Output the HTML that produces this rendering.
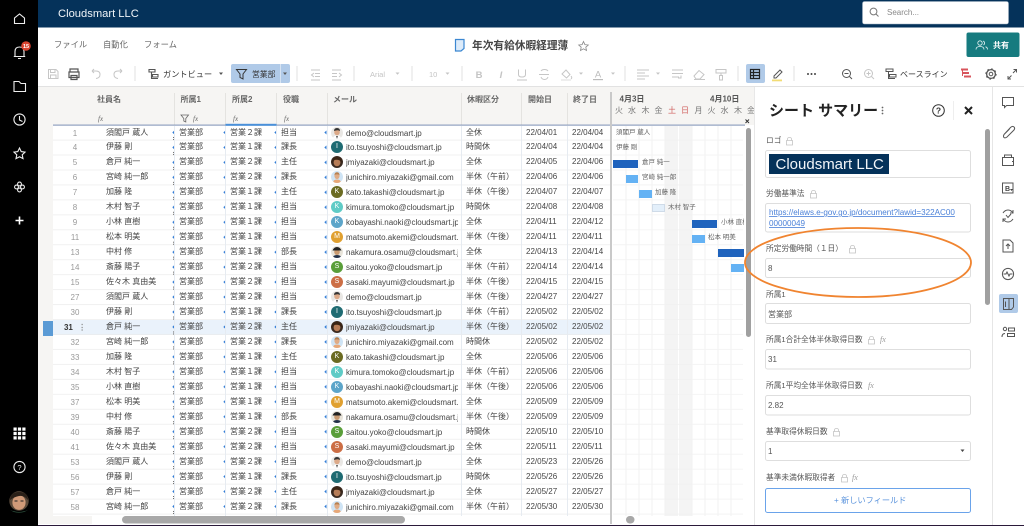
<!DOCTYPE html>
<html lang="ja"><head><meta charset="utf-8"><title>年次有給休暇経理薄</title>
<style>
html,body{margin:0;padding:0;width:1024px;height:526px;overflow:hidden;background:#fff}
*{box-sizing:border-box}
body{font-family:"Liberation Sans","Noto Sans CJK JP",sans-serif;position:relative;color:#444}
svg text{font-family:"Liberation Sans","Noto Sans CJK JP",sans-serif}
.abs{position:absolute}
#hdr{left:38px;top:87px;width:717px;height:38px;background:#f6f5f3}
#gut{left:38px;top:125px;width:15px;height:391px;background:#f6f5f3}
.r{position:absolute;left:0;width:558px;height:15px;font-size:8px;line-height:14px;white-space:nowrap}
.r>span{position:absolute;top:0}
.r>span:nth-child(1){left:0;width:44px;text-align:center;color:#999;top:1px}
.r>span:nth-child(2){left:53px}
.r>span:nth-child(3){left:126px}
.r>span:nth-child(4){left:177px}
.r>span:nth-child(5){left:228px}
.r>span:nth-child(6){left:293px;width:112px;overflow:hidden;height:15px;top:1px}
.r>span:nth-child(7){left:413px}
.r>span:nth-child(8){left:473px}
.r>span:nth-child(9){left:519px}
.r i{position:absolute;left:278px;top:1px;width:12px;height:12px;border-radius:50%;color:#fff;font:7px/12px "Liberation Sans",sans-serif;text-align:center;overflow:hidden}
.r i svg{display:block;width:12px;height:12px}
.hl{background:#eaf2fb}
.hl>span:nth-child(1){color:#333!important;font-weight:bold}
.bar{position:absolute;height:8px}
.d{background:#1f63bd}.l{background:#64b2f4}.p{background:#e3effa;border:1px solid #cfdbe8}
.gl{position:absolute;font-size:6.5px;color:#666;line-height:9px;white-space:nowrap;background:#fff0}
#gclip{left:612px;top:126px;width:132px;height:390px;overflow:hidden}
</style></head><body>
<div class="abs" id="hdr"></div>
<div class="abs" id="gut"></div>
<div class="abs" style="left:43px;top:320.5px;width:10px;height:15.5px;background:#5b9bd5"></div>
<div class="abs" style="left:38px;top:516px;width:54px;height:8px;background:#f6f5f3"></div>
<div class="abs" style="left:665px;top:126px;width:13px;height:390px;background:#f4f4f4"></div>
<div class="abs" style="left:679px;top:126px;width:13px;height:390px;background:#f4f4f4"></div>

<div class="abs" style="left:53px;top:125.5px;width:558px;height:0">
<div class="r" style="top:0"><span>1</span><span>須閣戸 蔵人</span><span>営業部</span><span>営業２課</span><span>担当</span><span>demo@cloudsmart.jp</span><span>全休</span><span>22/04/01</span><span>22/04/04</span><i><svg viewBox="0 0 12 12"><use href="#av1"/></svg></i></div>
<div class="r" style="top:14.96px"><span>4</span><span>伊藤 剛</span><span>営業部</span><span>営業１課</span><span>課長</span><span>ito.tsuyoshi@cloudsmart.jp</span><span>時間休</span><span>22/04/04</span><span>22/04/04</span><i style="background:#1f6b72">I</i></div>
<div class="r" style="top:29.92px"><span>5</span><span>倉戸 純一</span><span>営業部</span><span>営業２課</span><span>主任</span><span>jmiyazaki@cloudsmart.jp</span><span>全休</span><span>22/04/05</span><span>22/04/06</span><i><svg viewBox="0 0 12 12"><use href="#av2"/></svg></i></div>
<div class="r" style="top:44.88px"><span>6</span><span>宮崎 純一郎</span><span>営業部</span><span>営業２課</span><span>課長</span><span>junichiro.miyazaki@gmail.com</span><span>半休（午前）</span><span>22/04/06</span><span>22/04/06</span><i><svg viewBox="0 0 12 12"><use href="#av3"/></svg></i></div>
<div class="r" style="top:59.84px"><span>7</span><span>加藤 隆</span><span>営業部</span><span>営業１課</span><span>主任</span><span>kato.takashi@cloudsmart.jp</span><span>半休（午後）</span><span>22/04/07</span><span>22/04/07</span><i style="background:#6b6b22">K</i></div>
<div class="r" style="top:74.8px"><span>8</span><span>木村 智子</span><span>営業部</span><span>営業１課</span><span>担当</span><span>kimura.tomoko@cloudsmart.jp</span><span>時間休</span><span>22/04/08</span><span>22/04/08</span><i style="background:#5fcbc6">K</i></div>
<div class="r" style="top:89.76px"><span>9</span><span>小林 直樹</span><span>営業部</span><span>営業１課</span><span>担当</span><span>kobayashi.naoki@cloudsmart.jp</span><span>全休</span><span>22/04/11</span><span>22/04/12</span><i style="background:#5da5c9">K</i></div>
<div class="r" style="top:104.72px"><span>11</span><span>松本 明美</span><span>営業部</span><span>営業１課</span><span>担当</span><span>matsumoto.akemi@cloudsmart.jp</span><span>半休（午後）</span><span>22/04/11</span><span>22/04/11</span><i style="background:#e0a030">M</i></div>
<div class="r" style="top:119.68px"><span>13</span><span>中村 修</span><span>営業部</span><span>営業１課</span><span>部長</span><span>nakamura.osamu@cloudsmart.jp</span><span>全休</span><span>22/04/13</span><span>22/04/14</span><i><svg viewBox="0 0 12 12"><use href="#av4"/></svg></i></div>
<div class="r" style="top:134.64px"><span>14</span><span>斎藤 陽子</span><span>営業部</span><span>営業２課</span><span>担当</span><span>saitou.yoko@cloudsmart.jp</span><span>半休（午前）</span><span>22/04/14</span><span>22/04/14</span><i style="background:#5a9e3a">S</i></div>
<div class="r" style="top:149.6px"><span>15</span><span>佐々木 真由美</span><span>営業部</span><span>営業２課</span><span>担当</span><span>sasaki.mayumi@cloudsmart.jp</span><span>半休（午後）</span><span>22/04/15</span><span>22/04/15</span><i style="background:#cc6e45">S</i></div>
<div class="r" style="top:164.56px"><span>27</span><span>須閣戸 蔵人</span><span>営業部</span><span>営業２課</span><span>担当</span><span>demo@cloudsmart.jp</span><span>半休（午後）</span><span>22/04/27</span><span>22/04/27</span><i><svg viewBox="0 0 12 12"><use href="#av1"/></svg></i></div>
<div class="r" style="top:179.52px"><span>30</span><span>伊藤 剛</span><span>営業部</span><span>営業１課</span><span>課長</span><span>ito.tsuyoshi@cloudsmart.jp</span><span>半休（午前）</span><span>22/05/02</span><span>22/05/02</span><i style="background:#1f6b72">I</i></div>
<div class="r hl" style="top:194.48px"><span>31 <b style="font-weight:bold;color:#888;margin-left:3px">⋮</b></span><span>倉戸 純一</span><span>営業部</span><span>営業２課</span><span>主任</span><span>jmiyazaki@cloudsmart.jp</span><span>半休（午後）</span><span>22/05/02</span><span>22/05/02</span><i><svg viewBox="0 0 12 12"><use href="#av2"/></svg></i></div>
<div class="r" style="top:209.44px"><span>32</span><span>宮崎 純一郎</span><span>営業部</span><span>営業２課</span><span>課長</span><span>junichiro.miyazaki@gmail.com</span><span>時間休</span><span>22/05/02</span><span>22/05/02</span><i><svg viewBox="0 0 12 12"><use href="#av3"/></svg></i></div>
<div class="r" style="top:224.4px"><span>33</span><span>加藤 隆</span><span>営業部</span><span>営業１課</span><span>主任</span><span>kato.takashi@cloudsmart.jp</span><span>全休</span><span>22/05/06</span><span>22/05/06</span><i style="background:#6b6b22">K</i></div>
<div class="r" style="top:239.36px"><span>34</span><span>木村 智子</span><span>営業部</span><span>営業１課</span><span>担当</span><span>kimura.tomoko@cloudsmart.jp</span><span>半休（午前）</span><span>22/05/06</span><span>22/05/06</span><i style="background:#5fcbc6">K</i></div>
<div class="r" style="top:254.32px"><span>35</span><span>小林 直樹</span><span>営業部</span><span>営業１課</span><span>担当</span><span>kobayashi.naoki@cloudsmart.jp</span><span>半休（午後）</span><span>22/05/06</span><span>22/05/06</span><i style="background:#5da5c9">K</i></div>
<div class="r" style="top:269.28px"><span>37</span><span>松本 明美</span><span>営業部</span><span>営業１課</span><span>担当</span><span>matsumoto.akemi@cloudsmart.jp</span><span>全休</span><span>22/05/09</span><span>22/05/09</span><i style="background:#e0a030">M</i></div>
<div class="r" style="top:284.24px"><span>39</span><span>中村 修</span><span>営業部</span><span>営業１課</span><span>部長</span><span>nakamura.osamu@cloudsmart.jp</span><span>半休（午後）</span><span>22/05/09</span><span>22/05/09</span><i><svg viewBox="0 0 12 12"><use href="#av4"/></svg></i></div>
<div class="r" style="top:299.2px"><span>40</span><span>斎藤 陽子</span><span>営業部</span><span>営業２課</span><span>担当</span><span>saitou.yoko@cloudsmart.jp</span><span>時間休</span><span>22/05/10</span><span>22/05/10</span><i style="background:#5a9e3a">S</i></div>
<div class="r" style="top:314.16px"><span>41</span><span>佐々木 真由美</span><span>営業部</span><span>営業２課</span><span>担当</span><span>sasaki.mayumi@cloudsmart.jp</span><span>全休</span><span>22/05/11</span><span>22/05/11</span><i style="background:#cc6e45">S</i></div>
<div class="r" style="top:329.12px"><span>53</span><span>須閣戸 蔵人</span><span>営業部</span><span>営業２課</span><span>担当</span><span>demo@cloudsmart.jp</span><span>全休</span><span>22/05/23</span><span>22/05/26</span><i><svg viewBox="0 0 12 12"><use href="#av1"/></svg></i></div>
<div class="r" style="top:344.08px"><span>56</span><span>伊藤 剛</span><span>営業部</span><span>営業１課</span><span>課長</span><span>ito.tsuyoshi@cloudsmart.jp</span><span>時間休</span><span>22/05/26</span><span>22/05/26</span><i style="background:#1f6b72">I</i></div>
<div class="r" style="top:359.04px"><span>57</span><span>倉戸 純一</span><span>営業部</span><span>営業２課</span><span>主任</span><span>jmiyazaki@cloudsmart.jp</span><span>全休</span><span>22/05/27</span><span>22/05/27</span><i><svg viewBox="0 0 12 12"><use href="#av2"/></svg></i></div>
<div class="r" style="top:374px"><span>58</span><span>宮崎 純一郎</span><span>営業部</span><span>営業２課</span><span>課長</span><span>junichiro.miyazaki@gmail.com</span><span>半休（午前）</span><span>22/05/30</span><span>22/05/30</span><i><svg viewBox="0 0 12 12"><use href="#av3"/></svg></i></div>
</div>

<svg class="abs" style="left:0;top:0" width="1024" height="526" viewBox="0 0 1024 526">
<defs>
<symbol id="av1" viewBox="0 0 12 12"><rect width="12" height="12" fill="#e9e7e4"/><ellipse cx="6" cy="5" rx="2.8" ry="3.4" fill="#dca988"/><path d="M3 4Q3 1 6 1T9 4Q7 2.5 3 4z" fill="#333"/><path d="M2 12Q2 8.5 6 8.5T10 12z" fill="#fff"/><path d="M5 9h2l-1 3z" fill="#555"/></symbol>
<symbol id="av2" viewBox="0 0 12 12"><rect width="12" height="12" fill="#3a2a20"/><ellipse cx="6" cy="6.5" rx="3.4" ry="3.8" fill="#b77c56"/><path d="M1 6Q1 1 6 1T11 6Q8 3 3 4z" fill="#3a2414"/></symbol>
<symbol id="av3" viewBox="0 0 12 12"><rect width="12" height="12" fill="#cfe4f5"/><ellipse cx="6" cy="4.8" rx="2.6" ry="3.2" fill="#e0ac86"/><path d="M3.4 4Q3.6 1.2 6 1.2T8.6 4Q6 2.8 3.4 4z" fill="#b88050"/><path d="M2 12Q2 8.5 6 8.5T10 12z" fill="#e8a878"/></symbol>
<symbol id="av4" viewBox="0 0 12 12"><rect width="12" height="12" fill="#e8e4da"/><ellipse cx="6" cy="6" rx="2.8" ry="3" fill="#c99a70"/><path d="M1.5 4.5Q3 1 6 1T10.5 4.5z" fill="#222"/><path d="M1.5 12Q2 9 6 9T10.5 12z" fill="#223048"/></symbol>
<pattern id="rowp" x="0" y="125.5" width="1024" height="14.96" patternUnits="userSpaceOnUse">
<rect x="53" y="14.2" width="558" height=".7" fill="#ebebeb"/>
<rect x="613" y="14.2" width="130" height=".7" fill="#efefef"/>
<path d="M172.3 7l2-2v4zM223.3 7l2.2-2v4zM274.3 7l2.2-2v4zM324.3 7l2.2-2v4z" fill="#2f7bd6"/>
<rect x="173" y="11.5" width=".9" height="1" fill="#555"/><rect x="173" y="13.5" width=".9" height="1" fill="#555"/>
</pattern>
</defs>

<!-- grid overlay -->
<rect x="53" y="125.5" width="690" height="390" fill="url(#rowp)"/>
<g stroke="#e6ebf1" stroke-width="1">
<path d="M174.5 126V516M225.5 126V516M276.5 126V516M327.5 126V516M461.5 126V516M521.5 126V516M567.5 126V516"/>
</g>
<g stroke="#f2f2f2" stroke-width="1">
<path d="M626 126V516M639 126V516M652 126V516M665 126V516M692 126V516M705 126V516M718 126V516M731 126V516"/>
</g>
<g stroke="#e4e3e0" stroke-width="1">
<path d="M174.5 93V125M225.5 93V125M276.5 93V125M327.5 93V125M461.5 93V125M521.5 93V125M567.5 93V125"/>
</g>
<rect x="53" y="124.6" width="692" height="1" fill="#7c8fb4"/>
<rect x="225.5" y="123.8" width="51" height="2" fill="#4a90d9"/>
<rect x="610" y="92" width="2" height="432" fill="#c9c9c9"/>

<!-- sidebar -->
<rect width="38" height="526" fill="#000"/>
<rect x="38" width="986" height="27.5" fill="#05325a"/>
<rect x="38" y="86" width="986" height="1" fill="#e2e2e2"/>
<rect x="38" y="525" width="986" height="1" fill="#2b1a3a"/>
<g fill="none" stroke="#eee" stroke-width="1.1">
<path d="M14.5 23.5V18L19.5 14L24.5 18V23.5z"/>
<path d="M15 56.5V51.5Q15 47 19.5 47T24 51.5V56.5zM13.8 56.5H25.2M18 58.5H21"/>
<path d="M14 91.5V81.5H19L21 83.5H25.5V91.5z"/>
<circle cx="19.5" cy="119.5" r="5.6"/><path d="M19.5 116V120L22.5 121.5"/>
<path d="M19.5 148L21.2 151.6L25 152.1L22.2 154.8L23 158.6L19.5 156.8L16 158.6L16.8 154.8L14 152.1L17.8 151.6z"/>
<circle cx="19.5" cy="184" r="1.9"/><circle cx="19.5" cy="190" r="1.9"/><circle cx="16.5" cy="187" r="1.9"/><circle cx="22.5" cy="187" r="1.9"/>
<circle cx="19.5" cy="467" r="5.6"/>
</g>
<path d="M15.5 220.5H23.5M19.5 216.5V224.5" stroke="#fff" stroke-width="1.6"/>
<circle cx="26" cy="46" r="4.8" fill="#d8432f"/><text x="26" y="48" font-size="5.5" font-weight="bold" fill="#fff" text-anchor="middle">15</text>
<text x="19.5" y="470" font-size="7.5" fill="#eee" text-anchor="middle">?</text>
<g fill="#fff"><rect x="13.5" y="427.5" width="3.2" height="3.2"/><rect x="17.9" y="427.5" width="3.2" height="3.2"/><rect x="22.3" y="427.5" width="3.2" height="3.2"/><rect x="13.5" y="431.9" width="3.2" height="3.2"/><rect x="17.9" y="431.9" width="3.2" height="3.2"/><rect x="22.3" y="431.9" width="3.2" height="3.2"/><rect x="13.5" y="436.3" width="3.2" height="3.2"/><rect x="17.9" y="436.3" width="3.2" height="3.2"/><rect x="22.3" y="436.3" width="3.2" height="3.2"/></g>
<circle cx="19" cy="501" r="9.7" fill="#5a4a3a"/><ellipse cx="19" cy="502.5" rx="6.6" ry="7.4" fill="#d09a78"/><path d="M10 500Q10 492 19 492T28 500Q24 495 19 496T10 500z" fill="#2a2018"/><path d="M14.5 501h3M20.5 501h3" stroke="#222" stroke-width="1"/><path d="M10 510Q19 514 28 510L24 512Q19 513 14 512z" fill="#3a6a50"/>

<!-- header -->
<text x="58" y="17" font-size="11.2" fill="#f0f4f8">Cloudsmart LLC</text>
<rect x="862.5" y="1.5" width="146" height="22.5" rx="2" fill="#fff" stroke="#9fb0c0" stroke-width=".6"/>
<circle cx="873.5" cy="11.5" r="3.4" fill="none" stroke="#777"/><path d="M876 14L878.5 16.5" stroke="#777"/>
<text x="887" y="15" font-size="8" fill="#888">Search...</text>

<!-- menu -->
<text x="54" y="47.5" font-size="8.3" fill="#666">ファイル</text>
<text x="103" y="47.5" font-size="8.3" fill="#666">自動化</text>
<text x="144" y="47.5" font-size="8.3" fill="#666">フォーム</text>
<path d="M455.5 39.5H464V48.5L461 51H455.5z" fill="#dcebfa" stroke="#3b87d1" stroke-width="1.2"/>
<text x="472" y="49" font-size="10.7" font-weight="bold" fill="#444">年次有給休暇経理薄</text>
<path d="M583.5 41.5L584.9 44.6L588.3 45L585.8 47.2L586.5 50.5L583.5 48.8L580.5 50.5L581.2 47.2L578.7 45L582.1 44.6z" fill="none" stroke="#888" stroke-width=".8"/>
<rect x="966.5" y="32.5" width="53" height="24.5" rx="2" fill="#167b7f"/>
<g fill="none" stroke="#e8f4f4" stroke-width=".8"><circle cx="980" cy="43" r="2.2"/><path d="M976 49.5Q976 46.5 980 46.5T984 49.5"/><path d="M983 41A2.2 2.2 0 0 1 983.5 45M985.5 46.8Q987.5 47.3 987.5 49.5"/></g>
<text x="993" y="48" font-size="8" font-weight="bold" fill="#fff">共有</text>

<!-- toolbar -->
<rect x="231" y="64" width="59" height="19" rx="2" fill="#b0cae8"/><rect x="280" y="64" width=".8" height="19" fill="#dfe9f5"/>
<rect x="746" y="64" width="19" height="19" rx="2" fill="#b0cae8"/>
<g stroke="#e2e2e2" stroke-width="1"><path d="M135 66V81M297 66V81M354 66V81M412 66V81M462 66V81M625 66V81M738 66V81M794 66V81"/></g>
<g fill="none" stroke="#c6c6c6" stroke-width="1">
<path d="M48.5 69.5H56L58 71.5V78.5H48.5zM50.5 69.5V72.5H55V69.5M50.5 78.5V75H56V78.5"/>
<path d="M92 71L94 69M92 71L94 73M92 71H96Q100 71 100 74.5T96 78.5"/><path d="M122 71L120 69M122 71L120 73M122 71H118Q114 71 114 74.5T118 78.5"/>
<path d="M311 70H320M315 73.5H320M315 76.5H320M311 80H320M314 73L311.5 75L314 77"/>
<path d="M332 70H341M332 73.5H337M332 76.5H337M332 80H341M339 73L341.5 75L339 77"/>
<path d="M518.5 69.5V74.5Q518.5 77 522 77T525.5 74.5V69.5M517 80H527"/>
<path d="M539 74.5H549M541 71Q542 69.5 544.5 69.5T548 71M541 77Q542 79.5 544.5 79.5T548 77"/>
<path d="M562 74L566 70L570 74.5L566.5 78zM571 76Q572.5 78 571 79"/>
<path d="M637 70H649M637 73H645M637 76H649M637 79H645"/>
<path d="M672 70H683M672 73.5H683M672 77H679M681 75.5V78H678"/>
<path d="M694 76L699 70.5L704 74.5L700 79H696zM694 79.5H705"/>
<path d="M716 69.5H726V73H716zM721 73V75.5M719.5 75.5H722.5V80H719.5z"/>
<circle cx="868.5" cy="73.5" r="4"/><path d="M871.5 76.5L874 79M866.5 73.5H870.5M868.5 71.5V75.5"/>
</g>
<text x="479" y="78" font-size="9.5" font-weight="bold" fill="#c4c4c4" text-anchor="middle">B</text>
<text x="501" y="78" font-size="9.5" font-style="italic" fill="#c4c4c4" text-anchor="middle" font-weight="bold">I</text>
<text x="598" y="77.5" font-size="9.5" fill="#bbb" text-anchor="middle">A</text><rect x="593" y="79" width="10" height="1.2" fill="#bbb"/>
<rect x="561" y="79.5" width="10" height="1" fill="#ddd"/>
<text x="370" y="77" font-size="7.5" fill="#c4c4c4">Arial</text>
<text x="429" y="77" font-size="7.5" fill="#c4c4c4">10</text>
<g fill="#c4c4c4"><path d="M395.5 72.5H399.5L397.5 74.8zM445.5 72.5H449.5L447.5 74.8zM579 72.5H583L581 74.8zM611 72.5H615L613 74.8zM656 72.5H660L658 74.8z"/></g>
<g fill="#555"><path d="M219 72.5H223L221 75zM283 72.5H287L285 75z"/></g>
<g fill="none" stroke="#555" stroke-width="1">
<path d="M70 71.5V69H78V71.5M69 72H79V77.5H69zM71 75.5H77V79.5H71z" stroke-width="1.2"/>
<path d="M149 69.5H155V72H149zM151.5 72V78.5H158M152.5 74.5H158V77H152.5z" stroke-width="1.1"/>
<path d="M236.5 69.5H246.5L243 74V79L240 77.5V74z" stroke="#333"/>
<path d="M750.5 69.5H759.5V78.5H750.5zM750.5 72.5H759.5M750.5 75.5H759.5M753.5 69.5V78.5" stroke="#222" stroke-width="1.2"/>
<path d="M774 76L780 70L782 72L776 78H774z"/>
<circle cx="846.5" cy="73.5" r="4"/><path d="M849.5 76.5L852 79M844.5 73.5H848.5"/>
<path d="M886 69H893V71.5H886zM888.5 71.5V78.5H895M889.5 74.5H896V77H889.5z"/>
<circle cx="991" cy="74" r="1.8"/><circle cx="991" cy="74" r="4.4" stroke-width="1.3"/><circle cx="991" cy="74" r="5.1" stroke-width="1.1" stroke-dasharray="1.6 2.4"/>
<path d="M1008 79L1011.5 75.5M1008 76V79H1011M1016.5 69.5L1013 73M1013.5 69.5H1016.5V72.5" />
</g>
<rect x="772" y="79.5" width="10" height="1.8" fill="#f2dc75"/>
<g fill="#444"><circle cx="808" cy="74" r="1"/><circle cx="811.5" cy="74" r="1"/><circle cx="815" cy="74" r="1"/></g>
<g fill="#d8545c"><rect x="961" y="68.5" width="7" height="2"/><rect x="963" y="72" width="6" height="2"/><rect x="964" y="75.5" width="7" height="2"/><rect x="962" y="70" width="1" height="6"/></g>
<text x="163" y="77" font-size="8.2" fill="#333">ガントビュー</text>
<text x="252" y="77" font-size="7.8" fill="#333">営業部</text>
<text x="900" y="77" font-size="8" fill="#333">ベースライン</text>

<!-- header cells -->
<g font-size="8" font-weight="bold" fill="#666">
<text x="97" y="102">社員名</text><text x="180.5" y="102">所属1</text><text x="232" y="102">所属2</text><text x="283" y="102">役職</text><text x="333" y="102">メール</text><text x="467" y="102">休暇区分</text><text x="528" y="102">開始日</text><text x="573" y="102">終了日</text>
</g>
<g font-size="7" font-style="italic" fill="#666">
<text x="98" y="121" style="font-family:'Liberation Serif',serif">fx</text><text x="193" y="121" style="font-family:'Liberation Serif',serif">fx</text><text x="233" y="121" style="font-family:'Liberation Serif',serif">fx</text><text x="284" y="121" style="font-family:'Liberation Serif',serif">fx</text>
</g>
<path d="M181 115H188.5L185.8 118.5V122L183.8 121V118.5z" fill="none" stroke="#666" stroke-width=".8"/>
<!-- gantt header -->
<text x="619.5" y="101.5" font-size="8" font-weight="bold" fill="#555">4月3日</text>
<text x="710" y="101.5" font-size="8" font-weight="bold" fill="#555">4月10日</text>
<g font-size="8" fill="#777" text-anchor="middle"><text x="619" y="113">火</text><text x="632" y="113">水</text><text x="645.5" y="113">木</text><text x="658.5" y="113">金</text><text x="672" y="113" fill="#d0605e">土</text><text x="685" y="113" fill="#d0605e">日</text><text x="698.5" y="113">月</text><text x="711.5" y="113">火</text><text x="724.5" y="113">水</text><text x="738" y="113">木</text><text x="751" y="113">金</text></g>
<path d="M745.5 119.5L749 123M749 119.5L745.5 123" stroke="#333" stroke-width="1"/>
<rect x="755" y="87" width="238" height="438" fill="#fff"/>
<rect x="754" y="87" width="1" height="438" fill="#e8e8e8"/>
<rect x="992" y="87" width="1" height="438" fill="#e6e6e6"/>

<!-- scrollbars -->
<rect x="122" y="516" width="283" height="7.5" rx="3.7" fill="#a8a8a8"/>
<rect x="626" y="516" width="8.5" height="7.5" rx="3.7" fill="#a8a8a8"/>
<rect x="746" y="128" width="5" height="209" rx="2.5" fill="#a0a0a0"/>
<rect x="985" y="129" width="5" height="176" rx="2.5" fill="#a0a0a0"/>

<!-- panel -->
<text x="769" y="115.5" font-size="15" font-weight="bold" fill="#222">シート サマリー</text>
<g fill="#666"><circle cx="882.5" cy="107.5" r=".9"/><circle cx="882.5" cy="110.5" r=".9"/><circle cx="882.5" cy="113.5" r=".9"/></g>
<circle cx="938.5" cy="110.5" r="5.8" fill="none" stroke="#333" stroke-width="1"/><text x="938.5" y="113.5" font-size="8.5" font-weight="bold" text-anchor="middle" fill="#333">?</text>
<rect x="953" y="101" width="1" height="19" fill="#eee"/>
<path d="M965 107L972 114M972 107L965 114" stroke="#222" stroke-width="2"/>

<g fill="none" stroke="#dedede" stroke-width="1">
<rect x="765.5" y="150.5" width="205" height="27" rx="2"/>
<rect x="765.5" y="203.5" width="205" height="28.5" rx="2"/>
<rect x="765.5" y="258.5" width="205" height="19" rx="2"/>
<rect x="765.5" y="303.5" width="205" height="20" rx="2"/>
<rect x="765.5" y="349.5" width="205" height="19.5" rx="2"/>
<rect x="765.5" y="395.5" width="205" height="19.5" rx="2"/>
<rect x="765.5" y="441.5" width="205" height="19" rx="2"/>
</g>
<rect x="769" y="154" width="120" height="20" fill="#05325a"/>
<text x="775.5" y="169" font-size="15" fill="#f2f5f8">Cloudsmart LLC</text>
<g font-size="7.7" fill="#555">
<text x="766" y="143">ロゴ</text>
<text x="766" y="196">労働基準法</text>
<text x="766" y="251">所定労働時間（１日）</text>
<text x="766" y="297">所属1</text>
<text x="766" y="342">所属1合計全体半休取得日数</text>
<text x="766" y="388">所属1平均全体半休取得日数</text>
<text x="766" y="434">基準取得休暇日数</text>
<text x="766" y="480">基準未満休暇取得者</text>
</g>
<g fill="none" stroke="#c4c4c4" stroke-width=".8">
<path d="M786.5 140.5H792.5V145H786.5zM787.5 140.5V139Q787.5 137.5 789.5 137.5T791.5 139V140.5"/>
<path d="M810.5 193.5H816.5V198H810.5zM811.5 193.5V192Q811.5 190.5 813.5 190.5T815.5 192V193.5"/>
<path d="M849.5 248.5H855.5V253H849.5zM850.5 248.5V247Q850.5 245.5 852.5 245.5T854.5 247V248.5"/>
<path d="M868.5 339.5H874.5V344H868.5zM869.5 339.5V338Q869.5 336.5 871.5 336.5T873.5 338V339.5"/>
<path d="M833.5 431.5H839.5V436H833.5zM834.5 431.5V430Q834.5 428.5 836.5 428.5T838.5 430V431.5"/>
<path d="M841.5 477.5H847.5V482H841.5zM842.5 477.5V476Q842.5 474.5 844.5 474.5T846.5 476V477.5"/>
</g>
<g font-size="8" font-style="italic" fill="#999">
<text x="880" y="342" style="font-family:'Liberation Serif',serif">fx</text><text x="868" y="388" style="font-family:'Liberation Serif',serif">fx</text><text x="852" y="480" style="font-family:'Liberation Serif',serif">fx</text>
</g>
<g font-size="8.1" fill="#4a80d8" text-decoration="underline">
<text x="769" y="215">https://elaws.e-gov.go.jp/document?lawid=322AC00</text>
<text x="769" y="226">00000049</text>
</g>
<g font-size="8" fill="#555">
<text x="768" y="271">8</text><text x="768" y="317">営業部</text><text x="768" y="362">31</text><text x="768" y="408">2.82</text><text x="768" y="454">1</text>
</g>
<path d="M960.5 449.5H964.5L962.5 452z" fill="#444"/>
<rect x="765.5" y="488.5" width="205" height="24" rx="2" fill="#fff" stroke="#6aa3ea" stroke-width="1"/>
<text x="834" y="503" font-size="8.2" fill="#5a93dc">+ 新しいフィールド</text>

<!-- orange ellipse -->
<ellipse cx="858" cy="262.5" rx="113" ry="34.5" fill="none" stroke="#f08430" stroke-width="1.8"/>

<!-- right rail -->
<rect x="999" y="294" width="19" height="19" rx="2" fill="#b0cae8"/>
<g fill="none" stroke="#555" stroke-width="1">
<path d="M1002.5 97.5H1013.5V105.5H1006.5L1004.5 107.5V105.5H1002.5z"/>
<path d="M1004 134.5L1010.5 127.5Q1012.5 125.5 1014 127T1013.5 130.5L1007 137Q1005 138.5 1004 137.5T1004 134.5L1009.5 129"/>
<path d="M1002.5 157.5H1013.5V165.5H1002.5zM1004.5 157V155H1011.5V157M1012 161.5H1014"/>
<path d="M1002.5 183H1013V193H1002.5z"/>
<path d="M1003 213Q1005 210 1008 210T1013 213M1013 219Q1011 222 1008 222T1003 219M1013 210V213H1010M1003 222V219H1006M1006 215L1008 217.5L1011 214"/>
<path d="M1003 240H1010L1013 243V252H1003zM1008 249V244M1006 246L1008 244L1010 246"/>
<circle cx="1008" cy="274" r="5.6"/><path d="M1003.5 274H1006L1007 272L1009 276L1010 274H1012.5"/>
<path d="M1003.5 298.5H1009V309.5H1003.5zM1009 298.5H1013.5V307L1011.5 309.5H1009M1005.5 301.5V307"/>
<circle cx="1005" cy="329" r="1.7"/><path d="M1002 337Q1002 333.5 1005 333.5M1008.5 328H1014.5V331H1008.5zM1007.5 333.5H1014.5V336.5H1007.5z"/>
</g>
<text x="1005" y="191" font-size="7" font-weight="bold" fill="#444">B</text>
<path d="M1010 189H1013L1011.5 191z" fill="#444"/>
</svg>

<!-- gantt bars above grid lines -->
<div class="abs" id="gclip">
<div class="gl" style="left:4px;top:2px">須閣戸 蔵人</div>
<div class="gl" style="left:4px;top:17px">伊藤 剛</div>
<div class="bar d" style="left:1px;top:34px;width:25px"></div><div class="gl" style="left:30px;top:32px">倉戸 純一</div>
<div class="bar l" style="left:14px;top:48.5px;width:12px"></div><div class="gl" style="left:30px;top:47px">宮崎 純一郎</div>
<div class="bar l" style="left:27px;top:63.5px;width:13px"></div><div class="gl" style="left:43px;top:62px">加藤 隆</div>
<div class="bar p" style="left:40px;top:78px;width:13px"></div><div class="gl" style="left:56px;top:77px">木村 智子</div>
<div class="bar d" style="left:80px;top:93.5px;width:25px"></div><div class="gl" style="left:109px;top:92px">小林 直樹</div>
<div class="bar l" style="left:80px;top:108.5px;width:13px"></div><div class="gl" style="left:96px;top:106.5px">松本 明美</div>
<div class="bar d" style="left:106px;top:123px;width:26px"></div>
<div class="bar l" style="left:119px;top:138px;width:13px"></div>
</div>
</body></html>
